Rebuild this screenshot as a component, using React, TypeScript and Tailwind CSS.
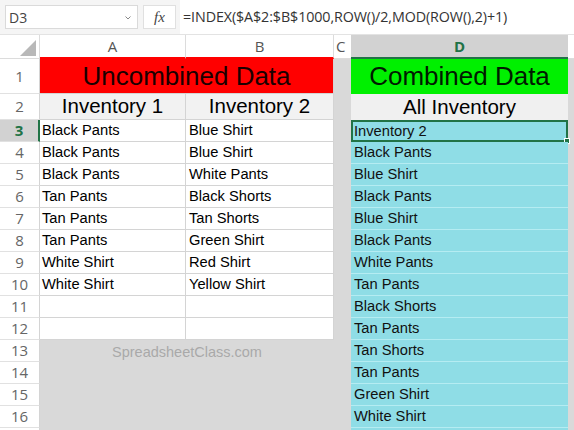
import React from "react";

const left: [string, string][] = [
  ["Black Pants", "Blue Shirt"],
  ["Black Pants", "Blue Shirt"],
  ["Black Pants", "White Pants"],
  ["Tan Pants", "Black Shorts"],
  ["Tan Pants", "Tan Shorts"],
  ["Tan Pants", "Green Shirt"],
  ["White Shirt", "Red Shirt"],
  ["White Shirt", "Yellow Shirt"],
];

const combined = [
  "Inventory 2",
  "Black Pants",
  "Blue Shirt",
  "Black Pants",
  "Blue Shirt",
  "Black Pants",
  "White Pants",
  "Tan Pants",
  "Black Shorts",
  "Tan Pants",
  "Tan Shorts",
  "Tan Pants",
  "Green Shirt",
  "White Shirt",
  "",
];

const arial = "font-['Liberation_Sans',Arial,sans-serif]";
const ui = "font-['Open_Sans','Noto_Sans',sans-serif]";

function RowHead({ n, h, sel }: { n: number | string; h: string; sel?: boolean }) {
  return (
    <div
      className={`${h} ${ui} flex items-center justify-center text-[15px] border-b border-[#e1e1e1] ${
        sel
          ? "bg-[#d2d2d2] text-[#217346] font-bold border-r-2 border-r-[#217346]"
          : "bg-white text-[#666] border-r border-r-[#d4d4d4]"
      }`}
    >
      {n}
    </div>
  );
}

export default function App() {
  const rows: React.ReactNode[] = [];
  for (let i = 0; i < 15; i++) {
    const r = i + 3;
    const lv = i < 8 ? left[i] : null;
    const inTable = r <= 12;
    rows.push(
      <div key={r} className="flex h-[22px]">
        <div className="w-[40px] shrink-0">
          <RowHead n={r <= 16 ? r : ""} h="h-[22px]" sel={r === 3} />
        </div>
        {inTable ? (
          <>
            <div className={`w-[146px] shrink-0 bg-white border-r border-b border-[#d4d4d4] ${arial} text-[14.7px] text-black pl-[2px] flex items-center`}>
              {lv ? lv[0] : ""}
            </div>
            <div className={`w-[148px] shrink-0 bg-white border-r border-b border-[#d4d4d4] ${arial} text-[14.7px] text-black pl-[3px] flex items-center`}>
              {lv ? lv[1] : ""}
            </div>
          </>
        ) : (
          <div className="w-[294px] shrink-0 bg-[#d9d9d9]" />
        )}
        <div className="w-[17px] shrink-0 bg-[#d9d9d9]" />
        <div
          className={`relative w-[217px] shrink-0 bg-[#8fdde6] ${arial} text-[14.7px] text-[#111] flex items-center ${
            r === 3 ? "border-2 border-[#217346] pl-[1px]" : "border-b border-[#b5ecf2] pl-[3px]"
          }`}
        >
          {combined[i]}
          {r === 3 && (
            <div className="absolute -right-[4px] -bottom-[4px] w-[6px] h-[6px] bg-[#217346] border border-white" />
          )}
        </div>
        <div className="flex-1 bg-[#d9d9d9]" />
      </div>
    );
  }

  return (
    <div className="w-[574px] h-[430px] overflow-hidden bg-white relative">
      {/* toolbar */}
      <div className="h-[35px] bg-[#f5f5f5] flex items-center border-b border-[#e3e3e3]">
        <div className="ml-[5px] w-[133px] h-[24px] bg-white border border-[#dadada] flex items-center justify-between pl-[3px] pr-[5px]">
          <span className={`${ui} text-[14px] text-[#444]`}>D3</span>
          <svg width="8" height="6" viewBox="0 0 8 6" className="mt-[1px]">
            <path d="M1.5 1.5 L4 4 L6.5 1.5" fill="none" stroke="#888" strokeWidth="1" />
          </svg>
        </div>
        <div className="ml-[5px] w-[33px] h-[24px] bg-white border border-[#e0e0e0] flex items-center justify-center">
          <span className="font-['Liberation_Serif',serif] italic text-[15px] text-[#444]">fx</span>
        </div>
        <div className="ml-[4px] flex-1 h-[34px] bg-white flex items-center pl-[3px]">
          <span className={`${ui} text-[14.3px] text-[#333] tracking-[-0.1px]`}>
            =INDEX($A$2:$B$1000,ROW()/2,MOD(ROW(),2)+1)
          </span>
        </div>
      </div>

      {/* column headers */}
      <div className={`flex h-[24px] ${ui} text-[15px] text-[#555]`}>
        <div className="w-[40px] shrink-0 bg-white border-r border-b border-[#dcdcdc] relative">
          <svg className="absolute right-[3px] bottom-[2px]" width="16" height="16" viewBox="0 0 16 16">
            <polygon points="16,0 16,16 0,16" fill="#b8b8b8" />
          </svg>
        </div>
        <div className="w-[146px] shrink-0 bg-white border-r border-[#dcdcdc] border-b-2 border-b-[#ff0000] flex items-center justify-center">A</div>
        <div className="w-[148px] shrink-0 bg-white border-r border-[#dcdcdc] border-b-2 border-b-[#ff0000] flex items-center justify-center">B</div>
        <div className="w-[17px] shrink-0 bg-white border-b border-[#dcdcdc] flex items-center pl-[2px] overflow-hidden">C</div>
        <div className="w-[217px] shrink-0 bg-[#d2d2d2] border-b-2 border-b-[#217346] flex items-center justify-center text-[#217346] font-bold">D</div>
        <div className="flex-1 bg-white border-b border-[#dcdcdc]" />
      </div>

      {/* row 1 */}
      <div className="flex h-[35px]">
        <div className="w-[40px] shrink-0">
          <RowHead n={1} h="h-[35px]" />
        </div>
        <div className={`w-[294px] shrink-0 bg-[#ff0000] border-r border-b border-[#d4d4d4] flex items-center justify-center ${arial} text-[26px] text-[#1a0000]`}>
          Uncombined Data
        </div>
        <div className="w-[17px] shrink-0 bg-[#d9d9d9]" />
        <div className={`w-[217px] shrink-0 bg-[#00f000] flex items-center justify-center ${arial} text-[26px] text-[#001a00]`}>
          Combined Data
        </div>
        <div className="flex-1 bg-[#d9d9d9]" />
      </div>

      {/* row 2 */}
      <div className="flex h-[26px]">
        <div className="w-[40px] shrink-0">
          <RowHead n={2} h="h-[26px]" />
        </div>
        <div className={`w-[146px] shrink-0 bg-[#f2f2f2] border-r border-b border-[#d4d4d4] flex items-center justify-center ${arial} text-[20.5px] text-black`}>
          Inventory 1
        </div>
        <div className={`w-[148px] shrink-0 bg-[#f2f2f2] border-r border-b border-[#d4d4d4] flex items-center justify-center ${arial} text-[20.5px] text-black`}>
          Inventory 2
        </div>
        <div className="w-[17px] shrink-0 bg-[#d9d9d9]" />
        <div className={`w-[217px] shrink-0 bg-[#f0f0f0] flex items-center justify-center ${arial} text-[20.5px] text-black`}>
          All Inventory
        </div>
        <div className="flex-1 bg-[#d9d9d9]" />
      </div>

      {rows}

      {/* watermark */}
      <div className={`absolute left-[112px] top-[342px] ${arial} text-[14.5px] text-[#a9a9a9]`}>
        SpreadsheetClass.com
      </div>
    </div>
  );
}
